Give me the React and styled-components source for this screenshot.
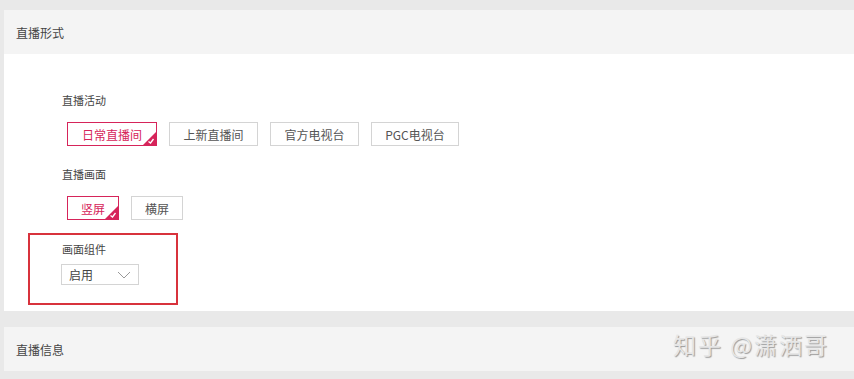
import React from 'react';
import styled, { createGlobalStyle } from 'styled-components';

const GlobalStyle = createGlobalStyle`
  html, body {
    margin: 0;
    padding: 0;
    background: #e9e9e9;
    font-family: "Noto Sans CJK SC", "Noto Sans", sans-serif;
    font-size: 12px;
    color: #444;
  }
`;

const Page = styled.div`
  position: relative;
  width: 854px;
  height: 379px;
  overflow: hidden;
  padding: 10px 0 0 4px;
  box-sizing: border-box;
  display: flex;
  flex-direction: column;
  gap: 16px;
`;

const Card = styled.div`
  background: #fff;
`;

const CardHeader = styled.div`
  height: 44px;
  background: #f4f4f4;
  display: flex;
  align-items: center;
  padding-left: 12px;
  font-size: 12px;
  color: #444;
`;

const CardBody = styled.div`
  height: 257px;
  box-sizing: border-box;
  padding: 38px 0 0 24px;
`;

const Field = styled.div`
  padding-left: 34px;
  margin-bottom: ${p => p.$gap}px;
`;

const Label = styled.div`
  font-size: 11px;
  line-height: 16px;
  color: #444;
  margin-bottom: 14px;
`;

const Options = styled.div`
  display: flex;
  gap: 12px;
  padding-left: 5px;
`;

const Option = styled.div`
  position: relative;
  box-sizing: border-box;
  width: ${p => p.$w}px;
  height: 24px;
  border: 1px solid ${p => (p.$active ? '#d6245a' : '#d4d4d4')};
  color: ${p => (p.$active ? '#d6245a' : '#555')};
  display: flex;
  align-items: center;
  justify-content: center;
  font-size: 12px;
  overflow: hidden;
`;

const Corner = styled.svg`
  position: absolute;
  right: 0;
  bottom: 0;
`;

const Highlight = styled.div`
  width: 150px;
  height: 72px;
  box-sizing: border-box;
  border: 2px solid #d8323c;
  padding: 6px 0 0 32px;
`;

const SubLabel = styled.div`
  font-size: 11px;
  line-height: 16px;
  color: #444;
  margin-bottom: 7px;
`;

const Select = styled.div`
  width: 78px;
  height: 21px;
  box-sizing: border-box;
  border: 1px solid #d4d4d4;
  margin-left: -1px;
  display: flex;
  align-items: center;
  justify-content: space-between;
  padding: 0 7px;
  font-size: 12px;
  color: #444;
`;

const Watermark = styled.div`
  position: absolute;
  left: 673px;
  top: 327px;
  font-size: 23px;
  letter-spacing: 2px;
  color: #e6e6e6;
  text-shadow: 1px 1px 1px #9a9a9a;
`;

const CornerMark = () => (
  <Corner width="13" height="13" viewBox="0 0 13 13">
    <polygon points="13,0 13,13 0,13" fill="#d6245a" />
    <polyline points="5.5,9.5 7.5,11 10.5,7" fill="none" stroke="#fff" strokeWidth="1.3" />
  </Corner>
);

const Chevron = () => (
  <svg width="14" height="8" viewBox="0 0 14 8">
    <polyline points="1,1 7,7 13,1" fill="none" stroke="#999" strokeWidth="1" />
  </svg>
);

export default function App() {
  return (
    <>
      <GlobalStyle />
      <Page>
        <Card>
          <CardHeader>直播形式</CardHeader>
          <CardBody>
            <Field $gap={20}>
              <Label>直播活动</Label>
              <Options>
                <Option $w={90} $active>日常直播间<CornerMark /></Option>
                <Option $w={89}>上新直播间</Option>
                <Option $w={89}>官方电视台</Option>
                <Option $w={88}>PGC电视台</Option>
              </Options>
            </Field>
            <Field $gap={13}>
              <Label>直播画面</Label>
              <Options>
                <Option $w={52} $active>竖屏<CornerMark /></Option>
                <Option $w={52}>横屏</Option>
              </Options>
            </Field>
            <Highlight>
              <SubLabel>画面组件</SubLabel>
              <Select>
                <span>启用</span>
                <Chevron />
              </Select>
            </Highlight>
          </CardBody>
        </Card>
        <Card>
          <CardHeader>直播信息</CardHeader>
        </Card>
        <Watermark>知乎 @潇洒哥</Watermark>
      </Page>
    </>
  );
}
